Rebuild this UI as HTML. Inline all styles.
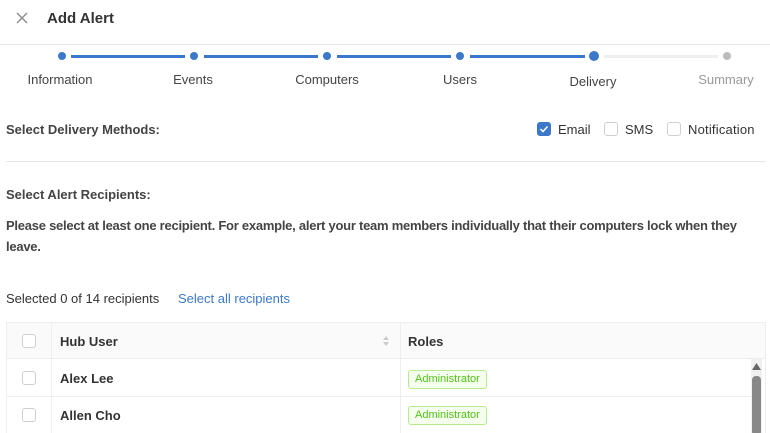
<!DOCTYPE html>
<html><head><style>
*{margin:0;padding:0;box-sizing:border-box}
html,body{width:770px;height:433px;overflow:hidden}
body{background:#fff;font-family:"Liberation Sans",sans-serif;color:#333;position:relative}
.a{position:absolute;white-space:nowrap}
.cb{position:absolute;width:14px;height:14px;border:1px solid #d0d0d0;border-radius:3px;background:#fff}
.tag{position:absolute;left:408px;height:19px;border:1px solid #b7eb8f;background:#f6ffed;color:#52c41a;font-size:11px;line-height:17px;padding:0 6px;border-radius:3px}
.dot{position:absolute;width:8px;height:8px;border-radius:50%;background:#3b78c9;top:52px}
.ln{position:absolute;height:3px;top:55px;background:#3b78c9}
.lbl{position:absolute;font-size:13px;color:#444;transform:translateX(-50%);white-space:nowrap}
</style></head><body>
<svg class="a" style="left:16px;top:12px" width="12" height="12"><path d="M1 1L11 11M11 1L1 11" stroke="#888" stroke-width="1.3"/></svg>
<div class="a" style="left:47px;top:10px;font-size:15px;font-weight:bold;color:#333">Add Alert</div>
<div class="a" style="left:0;top:44px;width:770px;height:1px;background:#e8e8e8"></div>

<div class="dot" style="left:58px"></div>
<div class="ln" style="left:71px;width:114px"></div>
<div class="dot" style="left:190px"></div>
<div class="ln" style="left:204px;width:114px"></div>
<div class="dot" style="left:323px"></div>
<div class="ln" style="left:337px;width:114px"></div>
<div class="dot" style="left:456px"></div>
<div class="ln" style="left:470px;width:115px"></div>
<div class="dot" style="left:589px;top:51px;width:10px;height:10px"></div>
<div class="ln" style="left:604px;width:114px;background:#eee"></div>
<div class="dot" style="left:723px;background:#bbb"></div>
<div class="lbl" style="left:60px;top:72px">Information</div>
<div class="lbl" style="left:193px;top:72px">Events</div>
<div class="lbl" style="left:327px;top:72px">Computers</div>
<div class="lbl" style="left:460px;top:72px">Users</div>
<div class="lbl" style="left:593px;top:74px">Delivery</div>
<div class="lbl" style="left:726px;top:72px;color:#999">Summary</div>

<div class="a" style="left:6px;top:122px;font-size:13px;font-weight:bold;color:#444">Select Delivery Methods:</div>
<div class="cb" style="left:537px;top:122px;background:#3b78c9;border-color:#3b78c9"></div>
<svg class="a" style="left:537px;top:122px" width="14" height="14"><path d="M3.5 7L6 9.5L10.5 4.5" stroke="#fff" stroke-width="1.5" fill="none"/></svg>
<div class="a" style="left:558px;top:122px;font-size:13px">Email</div>
<div class="cb" style="left:604px;top:122px"></div>
<div class="a" style="left:625px;top:122px;font-size:13px">SMS</div>
<div class="cb" style="left:667px;top:122px"></div>
<div class="a" style="left:688px;top:122px;font-size:13px;letter-spacing:0.2px">Notification</div>
<div class="a" style="left:6px;top:161px;width:759px;height:1px;background:#e8e8e8"></div>

<div class="a" style="left:6px;top:187px;font-size:13px;font-weight:bold;color:#444">Select Alert Recipients:</div>
<div class="a" style="left:6px;top:215px;font-size:13px;font-weight:bold;color:#444;line-height:21px;white-space:normal;width:764px;letter-spacing:-0.25px">Please select at least one recipient. For example, alert your team members individually that their computers lock when they leave.</div>
<div class="a" style="left:6px;top:291px;font-size:13px">Selected 0 of 14 recipients</div>
<div class="a" style="left:178px;top:291px;font-size:13px;color:#3b78c9">Select all recipients</div>

<div class="a" style="left:6px;top:322px;width:760px;height:120px;border:1px solid #eee"></div>
<div class="a" style="left:7px;top:323px;width:758px;height:36px;background:#fafafa;border-bottom:1px solid #eee"></div>
<div class="a" style="left:51px;top:323px;width:1px;height:110px;background:#eee"></div>
<div class="a" style="left:400px;top:323px;width:1px;height:110px;background:#eee"></div>
<div class="a" style="left:7px;top:396px;width:744px;height:1px;background:#eee"></div>
<div class="cb" style="left:22px;top:334px"></div>
<div class="a" style="left:60px;top:334px;font-size:13px;font-weight:bold;color:#333">Hub User</div>
<svg class="a" style="left:382px;top:335px" width="8" height="12"><path d="M4 1L7 5H1Z M4 11L7 7H1Z" fill="#ccc"/></svg>
<div class="a" style="left:408px;top:334px;font-size:13px;font-weight:bold;color:#333">Roles</div>
<div class="cb" style="left:22px;top:371px"></div>
<div class="a" style="left:60px;top:371px;font-size:13px;font-weight:bold;color:#333">Alex Lee</div>
<div class="tag" style="top:370px">Administrator</div>
<div class="cb" style="left:22px;top:408px"></div>
<div class="a" style="left:60px;top:408px;font-size:13px;font-weight:bold;color:#333">Allen Cho</div>
<div class="tag" style="top:406px">Administrator</div>
<div class="a" style="left:751px;top:359px;width:11px;height:74px;background:#f0f0f0"></div>
<svg class="a" style="left:752px;top:363px" width="9" height="7"><path d="M4.5 0L9 7H0Z" fill="#666"/></svg>
<div class="a" style="left:752px;top:376px;width:9px;height:60px;background:#888;border-radius:4px"></div>
</body></html>
